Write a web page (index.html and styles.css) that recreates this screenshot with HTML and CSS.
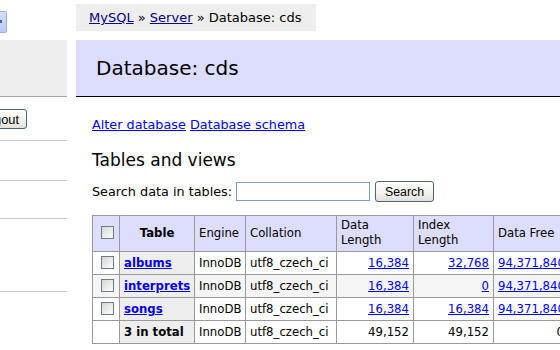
FILE: index.html
```html
<!DOCTYPE html>
<html lang="en">
<head>
<meta charset="utf-8">
<title>Database: cds - Adminer</title>
<link rel="stylesheet" href="styles.css">
</head>
<body>
<div class="page">
  <aside class="menu">
    <div class="db-select"><span class="db-arrow"></span></div>
    <div class="menu-head"></div>
    <div class="menu-sec sec-logout"><button class="btn btn-logout" type="button">Logout</button></div>
    <div class="menu-sec sec-a"></div>
    <div class="menu-sec sec-b"></div>
    <div class="menu-sec sec-c"></div>
  </aside>
  <main class="content">
    <div class="breadcrumb"><a class="crumb" href="#">MySQL</a> &raquo; <a class="crumb" href="#">Server</a> &raquo; Database: cds</div>
    <h2 class="title">Database: cds</h2>
    <div class="body">
      <p class="links"><a href="#">Alter database</a> <a href="#">Database schema</a></p>
      <h3 class="subtitle">Tables and views</h3>
      <form class="search">
        <span class="search-label">Search data in tables:</span>
        <input class="search-input" type="text">
        <button class="btn btn-search" type="button">Search</button>
      </form>
      <table class="tables">
        <thead>
          <tr>
            <td class="c-check"><input class="check" type="checkbox"></td>
            <th class="c-name">Table</th>
            <td class="c-engine">Engine</td>
            <td class="c-coll">Collation</td>
            <td class="c-dlen">Data Length</td>
            <td class="c-ilen">Index Length</td>
            <td class="c-free">Data Free</td>
          </tr>
        </thead>
        <tbody>
          <tr>
            <td><input class="check" type="checkbox"></td>
            <th><a href="#">albums</a></th>
            <td>InnoDB</td>
            <td>utf8_czech_ci</td>
            <td class="num"><a href="#">16,384</a></td>
            <td class="num"><a href="#">32,768</a></td>
            <td class="num"><a href="#">94,371,840</a></td>
          </tr>
          <tr class="odd">
            <td><input class="check" type="checkbox"></td>
            <th><a href="#">interprets</a></th>
            <td>InnoDB</td>
            <td>utf8_czech_ci</td>
            <td class="num"><a href="#">16,384</a></td>
            <td class="num"><a href="#">0</a></td>
            <td class="num"><a href="#">94,371,840</a></td>
          </tr>
          <tr>
            <td><input class="check" type="checkbox"></td>
            <th><a href="#">songs</a></th>
            <td>InnoDB</td>
            <td>utf8_czech_ci</td>
            <td class="num"><a href="#">16,384</a></td>
            <td class="num"><a href="#">16,384</a></td>
            <td class="num"><a href="#">94,371,840</a></td>
          </tr>
          <tr class="total">
            <td></td>
            <th>3 in total</th>
            <td>InnoDB</td>
            <td>utf8_czech_ci</td>
            <td class="num">49,152</td>
            <td class="num">49,152</td>
            <td class="num">0</td>
          </tr>
        </tbody>
      </table>
    </div>
  </main>
</div>
</body>
</html>
```
FILE: styles.css
```css
* { box-sizing: border-box; }

html, body {
  margin: 0;
  padding: 0;
  overflow: hidden;
  background: #fff;
}

body {
  font-family: "DejaVu Sans", Verdana, sans-serif;
  font-size: 12.8px;
  line-height: 1.25;
  color: #000;
  width: 560px;
  height: 350px;
}

a { color: #0000ee; }

.page {
  display: flex;
  align-items: flex-start;
}

/* ---------- left menu (scrolled partly out of view) ---------- */
.menu {
  width: 67px;
  flex-shrink: 0;
}

.db-select {
  position: relative;
  margin-top: 11px;
  width: 7px;
  height: 22px;
  border: 1px solid #98b0df;
  border-left: 0;
  border-radius: 0 2px 2px 0;
  background: linear-gradient(#d3e0fd, #b7cbf7);
}

.db-arrow {
  position: absolute;
  left: 0;
  top: 8px;
  width: 2px;
  height: 3px;
  background: #4d6185;
}

.menu-head {
  margin-top: 7px;
  height: 57px;
  background: #eee;
  border-bottom: 1px solid #a8a8a8;
}

.menu-sec {
  border-bottom: 1px solid #ccc;
}

.sec-logout {
  padding: 12px 0 11px;
  height: 44px;
}

.sec-a { height: 40px; }
.sec-b { height: 38px; }
.sec-c { height: 73px; }

.btn {
  font-family: "Liberation Sans", Arial, sans-serif;
  font-size: 12.3px;
  color: #000;
  padding: 0;
  border: 1px solid #4a6582;
  border-radius: 3px;
  background: linear-gradient(#ffffff, #f4f3ee 55%, #e2e0d6);
  display: block;
}

.btn-logout {
  width: 60px;
  height: 20px;
  margin-left: -33px;
  text-align: right;
  padding-right: 7px;
  font-size: 12.8px;
}

/* ---------- content ---------- */
.content {
  flex: 1;
  min-width: 0;
  margin-left: 9px;
}

.breadcrumb {
  margin-top: 4px;
  width: 240px;
  height: 27px;
  line-height: 27px;
  padding: 0 13px;
  background: #eee;
  font-size: 13px;
  white-space: nowrap;
}

.crumb { color: #000080; }

.title {
  margin: 9px 0 0;
  padding: 16px 20px;
  font-size: 20px;
  line-height: 24px;
  font-weight: normal;
  background: #ddf;
  border-bottom: 1px solid #000;
  white-space: nowrap;
}

.body {
  padding-left: 16px;
}

.links {
  margin: 20px 0 0;
  line-height: 16px;
  white-space: nowrap;
}

.subtitle {
  margin: 17px 0 0;
  font-size: 17px;
  line-height: 21px;
  font-weight: normal;
}

.search {
  margin: 10px 0 0;
  height: 21px;
  display: flex;
  align-items: center;
}

.search-label { white-space: nowrap; }

.search-input {
  margin: 0 0 0 4px;
  width: 134px;
  height: 19px;
  border: 1px solid #7f9db9;
  padding: 0 2px;
  background: #fff;
}

.btn-search {
  margin-left: 5px;
  width: 59px;
  height: 21px;
}

/* ---------- tables list ---------- */
.tables {
  margin-top: 13px;
  table-layout: fixed;
  width: 477px;
  border-collapse: separate;
  border-spacing: 0;
  border-top: 1px solid #999;
  border-left: 1px solid #999;
  font-size: 11.7px;
  line-height: 16px;
}

.tables td,
.tables th {
  border-right: 1px solid #999;
  border-bottom: 1px solid #999;
  padding: 3px 4px;
  vertical-align: middle;
  white-space: nowrap;
  overflow: visible;
}

.tables thead td,
.tables thead th {
  background: #ddf;
  padding: 2px 4px 3px;
  line-height: 15px;
  white-space: normal;
}

.tables thead th {
  text-align: center;
  font-weight: bold;
}

.tables tbody th {
  background: #eee;
  text-align: left;
  font-weight: bold;
}

.tables tr.odd td { background: #f5f5f5; }

.tables td.num { text-align: right; }

.c-check { width: 27px; }
.c-name { width: 75px; }
.c-engine { width: 51px; }
.c-coll { width: 91px; }
.c-dlen { width: 77px; }
.c-ilen { width: 80px; }
.c-free { width: 75px; }

.check {
  -webkit-appearance: none;
  appearance: none;
  display: block;
  width: 13px;
  height: 13px;
  margin: 1px 0 2px 4px;
  border: 1px solid #6b7c8f;
  background: linear-gradient(135deg, #d6d6d0, #f6f6f4 80%, #fff);
}
```
